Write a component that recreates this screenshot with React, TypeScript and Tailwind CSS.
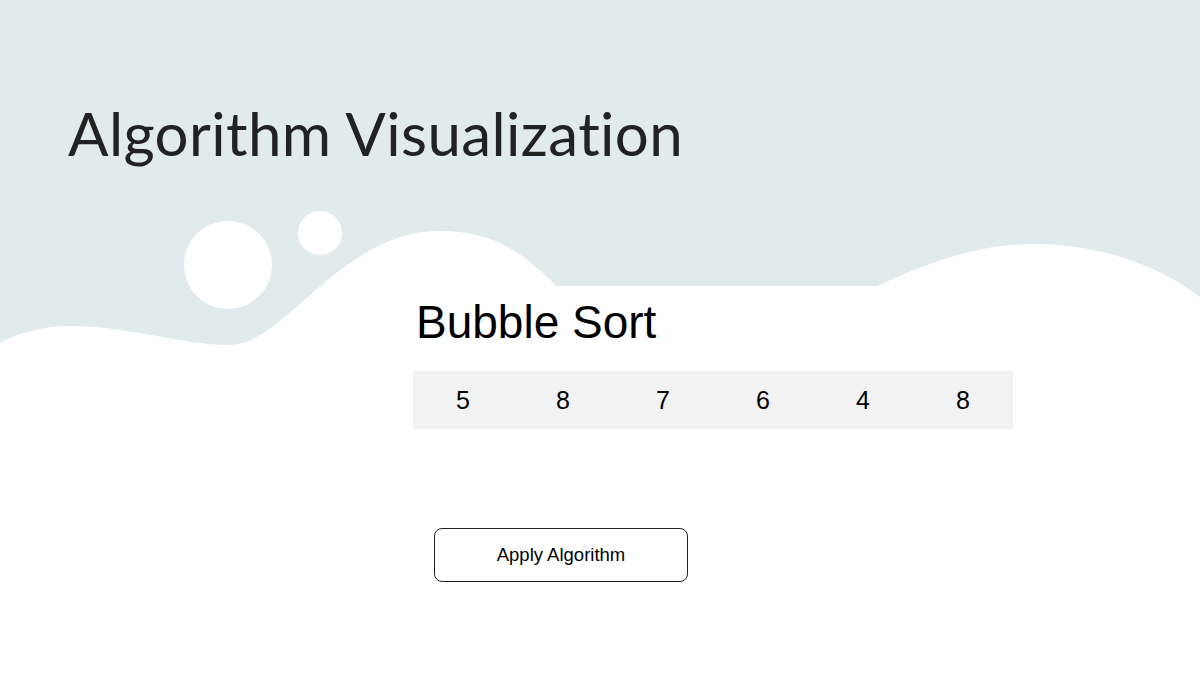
import React from "react";

const values = [5, 8, 7, 6, 4, 8];

// white wave that separates the header band from the page body
const WAVE =
  "M0,343 C20,332 45,326 70,326 C130,326 180,345 230,345 " +
  "C285,345 340,231 440,231 C500,231 530,258 570,300 " +
  "L840,305 C915,265 975,244 1033,244 C1100,244 1160,266 1200,297 " +
  "L1200,675 L0,675 Z";

const Backdrop: React.FC = () => (
  <svg
    className="absolute inset-0"
    width="1200"
    height="675"
    viewBox="0 0 1200 675"
    aria-hidden="true"
  >
    <path d={WAVE} fill="#ffffff" />
    <circle cx="228" cy="265" r="44" fill="#ffffff" />
    <circle cx="320" cy="233" r="22" fill="#ffffff" />
  </svg>
);

export default function App() {
  return (
    <div className="relative h-[675px] w-[1200px] overflow-hidden bg-[#e2ebec]">
      <Backdrop />

      <div className="relative flex flex-col">
        <h1
          className="pl-[68px] pt-[103px] text-[60px] leading-none font-normal tracking-[0.4px] text-[#222222] [font-variant-ligatures:none]"
          style={{ fontFamily: "Lato, 'Open Sans', sans-serif" }}
        >
          Algorithm Visualization
        </h1>

        {/* main panel */}
        <section
          className="ml-[413px] mt-[123px] h-[389px] w-[640px] bg-white pt-[13px]"
          style={{ fontFamily: "'Liberation Sans', Arial, sans-serif" }}
        >
          <h2 className="pl-[3px] text-[46px] leading-none text-black">Bubble Sort</h2>

          <div className="mt-[26px] flex h-[58px] w-[600px] items-center bg-[#f2f2f2] pt-[2px]">
            {values.map((v, i) => (
              <span key={i} className="w-[100px] text-center text-[25px] text-black">
                {v}
              </span>
            ))}
          </div>

          <button
            type="button"
            className="ml-[21px] mt-[99px] flex h-[54px] w-[254px] items-center justify-center rounded-[8px] border border-[#222222] bg-white text-[18.5px] text-black"
          >
            Apply Algorithm
          </button>
        </section>
      </div>
    </div>
  );
}
